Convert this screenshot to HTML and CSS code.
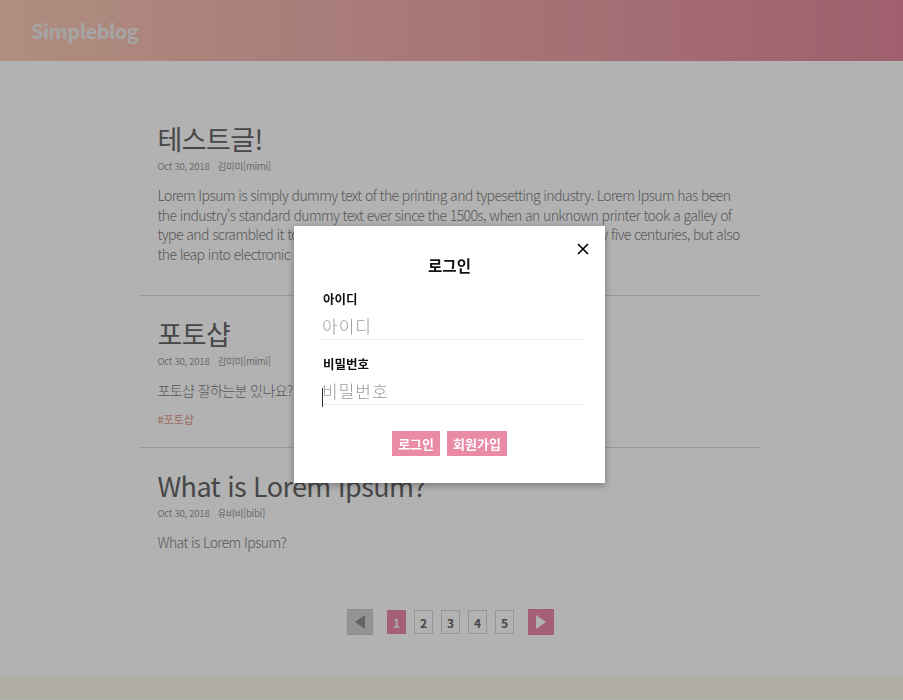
FILE: index.html
```html
<!DOCTYPE html>
<html lang="ko">
<head>
    <meta charset="UTF-8">
    <meta name="viewport" content="width=device-width, initial-scale=1.0">
    <title>Simpleblog</title>
    <link rel="stylesheet" href="styles.css">
</head>
<body>
    <header class="header">
        <div class="logo">Simpleblog</div>
    </header>

    <main class="container">
        <div class="post">
            <h2 class="post-title">테스트글!</h2>
            <div class="post-meta"><span>Oct 30, 2018</span><span>김미미[mimi]</span></div>
            <p class="post-body">Lorem Ipsum is simply dummy text of the printing and typesetting industry. Lorem Ipsum has been the industry's standard dummy text ever since the 1500s, when an unknown printer took a galley of type and scrambled it to make a type specimen book. It has survived not only five centuries, but also the leap into electronic typesetting, remaining essentially unchanged.</p>
        </div>

        <div class="post">
            <h2 class="post-title">포토샵</h2>
            <div class="post-meta"><span>Oct 30, 2018</span><span>김미미[mimi]</span></div>
            <p class="post-body">포토샵 잘하는분 있나요? 연락주세요</p>
            <div class="post-tags">#포토샵</div>
        </div>

        <div class="post">
            <h2 class="post-title">What is Lorem Ipsum?</h2>
            <div class="post-meta"><span>Oct 30, 2018</span><span>유비비[bibi]</span></div>
            <p class="post-body">What is Lorem Ipsum?</p>
        </div>

        <div class="pagination">
            <button class="page-arrow prev"><span class="tri-left"></span></button>
            <div class="pages">
                <button class="page-num active">1</button>
                <button class="page-num">2</button>
                <button class="page-num">3</button>
                <button class="page-num">4</button>
                <button class="page-num">5</button>
            </div>
            <button class="page-arrow next"><span class="tri-right"></span></button>
        </div>
    </main>

    <footer class="footer"></footer>

    <!-- login modal -->
    <div class="dim">
        <div class="modal">
            <button class="close-btn">
                <svg width="12" height="12" viewBox="0 0 12 12"><path d="M1 1L11 11M11 1L1 11" stroke="#000" stroke-width="1.6"/></svg>
            </button>
            <h3 class="modal-title">로그인</h3>
            <form class="login-form">
                <label for="userId">아이디</label>
                <input type="text" id="userId" placeholder="아이디">

                <label for="userPw">비밀번호</label>
                <div class="input-wrap">
                    <span class="caret"></span>
                    <input type="password" id="userPw" placeholder="비밀번호">
                </div>

                <div class="modal-buttons">
                    <button type="submit" class="pink-btn">로그인</button>
                    <button type="button" class="pink-btn">회원가입</button>
                </div>
            </form>
        </div>
    </div>
</body>
</html>
```

FILE: styles.css
```css
body { margin: 0; font-family: "Noto Sans CJK KR", "Noto Sans", sans-serif; background: #fff; }

.header { height: 61px; display: flex; align-items: center; padding-left: 31px; background: linear-gradient(to right, #fbcbb7, #e5899f); }
.logo { color: #ececec; font-size: 20px; font-weight: bold; letter-spacing: -0.5px; }

.container { width: 622px; margin-left: calc(50% - 313px); padding: 40px 0 40px; }
.post { padding: 19px 19px 20px; border-bottom: 1px solid #dcdcdc; }
.post:nth-child(3) { border-bottom: none; }
.post-title { margin: 0; font-size: 27px; font-weight: normal; color: #666; line-height: 38px; letter-spacing: -0.6px; }
.post-meta { margin-top: 1px; font-size: 9.6px; line-height: 14px; color: #9a9a9a; letter-spacing: -0.3px; }
.post-meta span { margin-right: 8px; }
.post-body { margin: 13px 0 10px; font-size: 14px; line-height: 19.7px; color: #808080; font-weight: 300; letter-spacing: -0.6px; }
.post-tags { margin-top: 7px; font-size: 11px; line-height: 16px; color: #dc9c8c; }

.pagination { display: flex; justify-content: center; align-items: center; gap: 14px; margin-top: 27px; padding-left: 2px; }
.pages { display: flex; gap: 8px; }
.page-arrow { width: 26px; height: 26px; border: none; padding: 0; display: flex; align-items: center; justify-content: center; }
.page-arrow.prev { background: #d3d3d3; border: 1px solid #c8c8c8; }
.page-arrow.next { background: #eb8aa6; }
.tri-left { border-style: solid; border-width: 7px 10px 7px 0; border-color: transparent #8e8e8e transparent transparent; }
.tri-right { border-style: solid; border-width: 7px 0 7px 10px; border-color: transparent transparent transparent #fff; }
.page-num { width: 19px; height: 24px; padding: 0; border: 1px solid #d6d6d6; background: #fff; font-family: inherit; font-size: 12px; font-weight: bold; color: #666; }
.page-num.active { background: #eb8aa6; border-color: #eb8aa6; color: #f3f3f3; }

.footer { height: 24px; background: #fbf6ed; }

.dim { position: fixed; left: 0; top: 0; right: 0; bottom: 0; background: rgba(0, 0, 0, 0.3); display: flex; align-items: center; justify-content: center; padding-top: 9px; padding-right: 4px; }
.modal { position: relative; width: 311px; height: 257px; background: #fff; box-shadow: 0 2px 8px rgba(0, 0, 0, 0.35); box-sizing: border-box; padding: 28px 20px 0 26px; }
.close-btn { position: absolute; right: 16px; top: 17px; border: none; background: none; padding: 0; width: 12px; height: 12px; }
.close-btn svg { display: block; }
.modal-title { margin: 0 -20px 14px -26px; text-align: center; font-size: 15.5px; font-weight: bold; color: #111; line-height: 22px; }
.login-form label { display: block; font-size: 12.5px; font-weight: bold; color: #111; padding-left: 3px; line-height: 18px; }
.login-form input { display: block; width: 100%; box-sizing: border-box; border: none; border-bottom: 1px solid #ebebeb; font-family: inherit; font-size: 17px; line-height: 22px; height: 26px; padding: 0 2px 3px; margin: 6px 0 15px; outline: none; color: #333; font-weight: 300; }
.login-form input::placeholder { color: #999; letter-spacing: 1px; }
.input-wrap { position: relative; }
.caret { position: absolute; left: 2px; top: 9px; width: 1px; height: 19px; background: #333; }
.modal-buttons { display: flex; justify-content: center; gap: 7px; margin: 26px -20px 0 -26px; }
.pink-btn { height: 25px; border: none; background: #e98aa6; color: #fff; font-family: inherit; font-size: 13px; font-weight: bold; padding: 0 6px; }
```
